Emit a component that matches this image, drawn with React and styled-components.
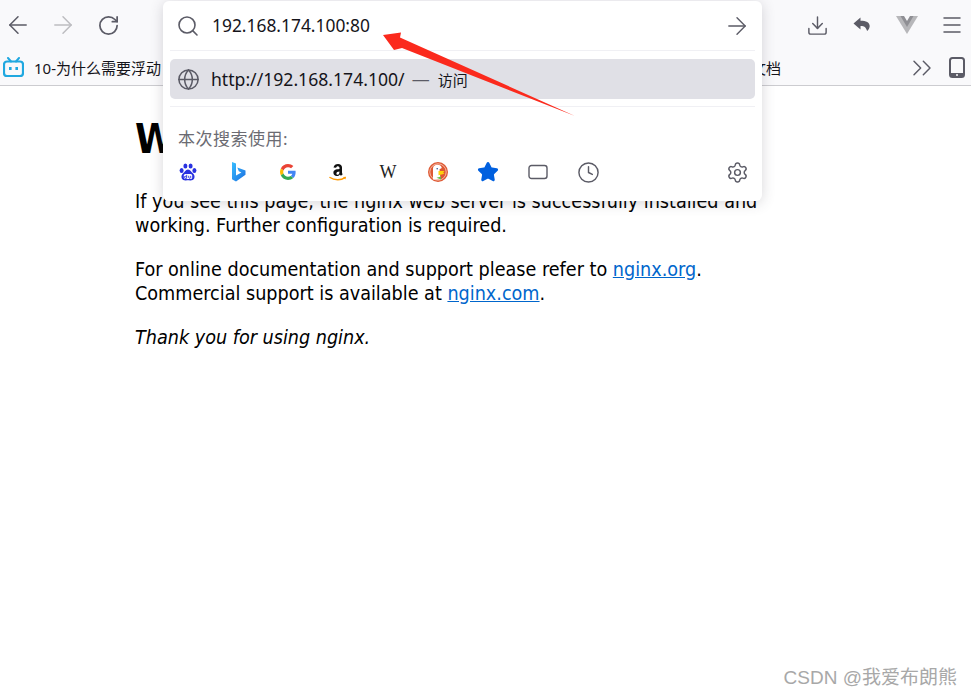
import styled, { createGlobalStyle } from 'styled-components';
import { ArrowLeft, ArrowRight, RotateCw, Search, Globe, Download, Menu, ChevronsRight, Clock, Settings, Star } from 'lucide-react';

const GlobalStyle = createGlobalStyle`
  html, body {
    margin: 0;
    padding: 0;
    background: #fff;
  }
  body {
    font-family: "DejaVu Sans Condensed", "DejaVu Sans", sans-serif;
    overflow: hidden;
  }
`;

const Screen = styled.div`
  position: relative;
  width: 971px;
  height: 698px;
  overflow: hidden;
  background: #fff;
`;

const Chrome = styled.header`
  background: #f9f9fb;
  border-bottom: 1px solid #ccccd0;
  height: 85px;
`;

const NavRow = styled.div`
  display: flex;
  align-items: center;
  height: 50px;
  padding-right: 1px;
`;

const ToolGroup = styled.div`
  display: flex;
  gap: 9px;
  margin-left: ${(p) => (p.$right ? 'auto' : '0')};
`;

const ToolButton = styled.div`
  width: 36px;
  height: 36px;
  display: flex;
  align-items: center;
  justify-content: center;
  color: ${(p) => (p.$disabled ? '#bdbdc1' : '#5b5b66')};
`;

const BookmarkRow = styled.div`
  display: flex;
  align-items: center;
  height: 35px;
  padding: 0 6px 0 3px;
  font-family: "Noto Sans", "Noto Sans CJK SC", sans-serif;
  font-size: 15px;
  color: #15141a;
`;

const Bookmark = styled.span`
  margin-left: ${(p) => p.$gap || 0}px;
  white-space: nowrap;
`;

const BarEnd = styled.div`
  display: flex;
  align-items: center;
  gap: 11px;
  margin-left: auto;
  color: #5b5b66;
`;

const UrlPopup = styled.div`
  position: absolute;
  left: 163px;
  top: 1px;
  width: 599px;
  height: 200px;
  box-sizing: border-box;
  padding: 0 7px;
  background: #fff;
  border-radius: 6px;
  box-shadow: 0 2px 14px rgba(58, 57, 68, 0.2);
  z-index: 2;
  font-family: "Noto Sans", "Noto Sans CJK SC", sans-serif;
  color: #15141a;
`;

const InputRow = styled.div`
  display: flex;
  align-items: center;
  height: 49px;
  padding: 0 4px 0 6px;
  gap: 12px;
  font-size: 17.4px;
  color: #5b5b66;
`;

const InputText = styled.span`
  color: #15141a;
  flex: 1;
  margin-bottom: 2px;
`;

const Divider = styled.div`
  height: 1px;
  background: #f0f0f4;
  margin-top: ${(p) => p.$top || 0}px;
`;

const Suggestion = styled.div`
  display: flex;
  align-items: center;
  height: 40px;
  margin-top: 8px;
  padding: 0 7px;
  gap: 11px;
  background: #e0e0e6;
  border-radius: 5px;
  color: #5b5b66;
`;

const SuggestionUrl = styled.span`
  font-size: 17.6px;
  color: #15141a;
`;

const SuggestionAction = styled.span`
  font-size: 15px;
  color: #15141a;
  margin-left: -3px;
`;

const Dash = styled.span`
  color: #5b5b66;
  font-size: 18px;
  margin-left: -4px;
`;

const EngineLabel = styled.div`
  height: 24px;
  line-height: 24px;
  margin-top: 20px;
  padding-left: 8px;
  font-size: 17px;
  letter-spacing: 0.5px;
  color: #6b6b72;
`;

const EngineRow = styled.div`
  display: flex;
  align-items: center;
  gap: 14px;
  height: 36px;
  margin-top: 3px;
`;

const Engine = styled.div`
  width: 36px;
  height: 36px;
  display: flex;
  align-items: center;
  justify-content: center;
  color: #5b5b66;
  margin-left: ${(p) => (p.$end ? 'auto' : '0')};
`;

const WikiGlyph = styled.span`
  font-family: "Liberation Serif", serif;
  font-size: 18px;
  color: #222;
`;

const Page = styled.main`
  width: 701px;
  margin: 0 auto;
  font-size: 19.6px;
  line-height: 24px;
  color: #000;
`;

const Heading = styled.h1`
  margin: 29px 0 27px;
  font-size: 40px;
  line-height: 48px;
  font-weight: 700;
  white-space: nowrap;
`;

const Para = styled.p`
  margin: 0 0 20px;
  font-style: ${(p) => (p.$italic ? 'italic' : 'normal')};
`;

const PageLink = styled.a`
  color: #0066cc;
  text-decoration: underline;
`;

const Annotation = styled.svg`
  position: absolute;
  left: 0;
  top: 0;
  z-index: 3;
  pointer-events: none;
`;

const Watermark = styled.div`
  position: absolute;
  right: 14px;
  bottom: 8px;
  font-family: "Liberation Sans", "Noto Sans CJK SC", sans-serif;
  font-size: 19px;
  line-height: 24px;
  color: #a8a8a8;
`;

const Bilibili = () => (
  <svg width="21" height="21" viewBox="0 0 21 21">
    <path d="M5 1l3 3.5M16 1l-3 3.5" stroke="#20a8e0" strokeWidth="2" strokeLinecap="round" />
    <rect x="1" y="4.5" width="19" height="14.5" rx="3" fill="none" stroke="#20a8e0" strokeWidth="2.2" />
    <rect x="6" y="10" width="2.6" height="3" fill="#20a8e0" />
    <rect x="12.4" y="10" width="2.6" height="3" fill="#20a8e0" />
  </svg>
);

const UndoIcon = () => (
  <svg width="20" height="20" viewBox="0 0 20 20">
    <path d="M8.5 2.500L1.500 8.500l7 6v-3.600c3.400-.1 5.500.9 6.600 5.200 1.600-1.400 2.600-3.200 2.600-5 0-3.600-3.500-5.400-9.200-5.400z" fill="#5b5b66" />
  </svg>
);

const VueMark = () => (
  <svg width="22" height="18" viewBox="0 0 22 18">
    <path d="M0 0h22L11 18z" fill="#b7b7ba" />
    <path d="M4.500 0h13L11 11z" fill="#8f8f94" />
    <path d="M8 0h6l-3 5z" fill="#f9f9fb" />
  </svg>
);

const PhoneIcon = () => (
  <svg width="16" height="21" viewBox="0 0 16 21">
    <rect x="1" y="1" width="14" height="19" rx="2.500" fill="none" stroke="#5b5b66" strokeWidth="2" />
    <rect x="1" y="16" width="14" height="4" fill="#5b5b66" />
    <circle cx="8" cy="18" r="1" fill="#f9f9fb" />
  </svg>
);

const BaiduIcon = () => (
  <svg width="18" height="18" viewBox="0 0 18 18" fill="#2932e1">
    <ellipse cx="2.600" cy="7.500" rx="2" ry="2.500" />
    <ellipse cx="6.400" cy="3" rx="2" ry="2.600" />
    <ellipse cx="11.600" cy="3" rx="2" ry="2.600" />
    <ellipse cx="15.400" cy="7.500" rx="2" ry="2.500" />
    <path d="M9 6.500c-2.500 0-3.300 2.500-4.800 3.800C2.700 11.500 2 13.500 2.700 15.200c.7 1.800 2.800 2.400 4.300 2.200 1.300-.2 2.700-.2 4 0 1.500.2 3.600-.4 4.300-2.200.7-1.700 0-3.700-1.500-4.900C12.300 9 11.500 6.500 9 6.500z" />
    <rect x="4.800" y="11" width="8.400" height="5" rx="1.500" fill="#fff" />
    <path d="M7.700 11.800v3.500H6c-1 0-1-2 0-2h1.700M9.700 12.800v1.700c0 1 2 1 2 0v-1.700" stroke="#2932e1" strokeWidth=".9" fill="none" />
  </svg>
);

const BingIcon = () => (
  <svg width="18" height="20" viewBox="0 0 18 20">
    <defs>
      <linearGradient id="bingGrad" x1="0" y1="0" x2="1" y2="1">
        <stop offset="0" stopColor="#37bdff" />
        <stop offset="1" stopColor="#1b6fe0" />
      </linearGradient>
    </defs>
    <path d="M3 0l4 1.400v12.200l5.400-3L9.800 9.300 8.300 5.600l8.200 2.900v4.200L7 19.500 3 17.200z" fill="url(#bingGrad)" />
  </svg>
);

const GoogleIcon = () => (
  <svg width="16" height="16" viewBox="0 0 48 48">
    <path fill="#EA4335" d="M24 9.500c3.500 0 6.700 1.200 9.200 3.600l6.900-6.900C35.900 2.400 30.500 0 24 0 14.600 0 6.500 5.400 2.600 13.200l8 6.200C12.400 13.700 17.700 9.500 24 9.500z" />
    <path fill="#4285F4" d="M46.900 24.500c0-1.600-.1-3.100-.4-4.500H24v9h12.900c-.6 3-2.200 5.500-4.700 7.200l7.700 6c4.500-4.200 7-10.300 7-17.700z" />
    <path fill="#FBBC05" d="M10.500 28.600c-.5-1.500-.8-3-.8-4.600s.3-3.200.8-4.600l-8-6.200C.9 16.500 0 20.100 0 24s.9 7.500 2.600 10.800l7.900-6.200z" />
    <path fill="#34A853" d="M24 48c6.500 0 11.900-2.100 15.900-5.800l-7.700-6c-2.100 1.400-4.900 2.300-8.200 2.300-6.300 0-11.600-4.200-13.500-9.900l-8 6.200C6.500 42.600 14.600 48 24 48z" />
  </svg>
);

const AmazonIcon = () => (
  <svg width="18" height="20" viewBox="0 0 18 20">
    <path d="M4.500 5.500C5 3 6.800 2 9 2c2.500 0 4 1.200 4 3.500v5c0 .8.300 1.300.7 1.800L12 13.800c-.5-.4-.9-.9-1.100-1.300-.8 1-1.800 1.500-3.100 1.500-2 0-3.400-1.200-3.400-3.200 0-2.700 2.300-3.500 6.100-3.800V6c0-1-.5-1.800-1.600-1.800-1 0-1.600.6-1.800 1.500zm6 3.900c-2.100.1-3.100.7-3.100 2 0 .8.500 1.300 1.200 1.300 1.300 0 1.900-1.300 1.900-3.300z" fill="#111" />
    <path d="M1 15.500c4.500 3 11 3 15 .2" stroke="#f90" strokeWidth="1.500" fill="none" strokeLinecap="round" />
    <path d="M14 15l3-.2-.7 2.600z" fill="#f90" />
  </svg>
);

const DuckIcon = () => (
  <svg width="20" height="20" viewBox="0 0 20 20">
    <circle cx="10" cy="10" r="10" fill="#de5833" />
    <circle cx="10" cy="10" r="8.200" fill="none" stroke="#f6c4b2" strokeWidth=".9" />
    <path d="M5 17.500V6.500C5 4 7 2.800 9.500 2.800c2.300 0 3.800 1.100 4.300 3.200l-2.300 1.200 1 10.300z" fill="#fff" />
    <circle cx="9.200" cy="6.800" r=".8" fill="#2d4f8e" />
    <path d="M10.500 9h6l-1.300 1.800 1.300 1-6 1.400z" fill="#fdd20a" />
    <path d="M8.500 15.800l4.500-1.300v3z" fill="#65bc46" />
  </svg>
);

const TabIcon = () => (
  <svg width="20" height="16" viewBox="0 0 20 16">
    <rect x="1" y="1.500" width="18" height="13" rx="2.500" fill="none" stroke="#5b5b66" strokeWidth="1.400" />
  </svg>
);

export default function App() {
  return (
    <Screen>
      <GlobalStyle />
      <Chrome>
        <NavRow>
          <ToolGroup>
            <ToolButton><ArrowLeft size={28} strokeWidth={1.3} /></ToolButton>
            <ToolButton $disabled><ArrowRight size={28} strokeWidth={1.3} /></ToolButton>
            <ToolButton><RotateCw size={23} strokeWidth={1.8} /></ToolButton>
          </ToolGroup>
          <ToolGroup $right>
            <ToolButton><Download size={23} strokeWidth={1.5} /></ToolButton>
            <ToolButton><UndoIcon /></ToolButton>
            <ToolButton><VueMark /></ToolButton>
            <ToolButton><Menu size={24} strokeWidth={1.5} /></ToolButton>
          </ToolGroup>
        </NavRow>
        <BookmarkRow>
          <Bilibili />
          <Bookmark $gap={10}>10-为什么需要浮动</Bookmark>
          <Bookmark $gap={590}>文档</Bookmark>
          <BarEnd>
            <ChevronsRight size={32} strokeWidth={1.1} />
            <PhoneIcon />
          </BarEnd>
        </BookmarkRow>
      </Chrome>

      <UrlPopup>
        <InputRow>
          <Search size={24} strokeWidth={1.6} />
          <InputText>192.168.174.100:80</InputText>
          <ArrowRight size={28} strokeWidth={1.2} />
        </InputRow>
        <Divider />
        <Suggestion>
          <Globe size={23} strokeWidth={1.6} />
          <SuggestionUrl>http://192.168.174.100/</SuggestionUrl>
          <Dash>—</Dash>
          <SuggestionAction>访问</SuggestionAction>
        </Suggestion>
        <Divider $top={7} />
        <EngineLabel>本次搜索使用:</EngineLabel>
        <EngineRow>
          <Engine><BaiduIcon /></Engine>
          <Engine><BingIcon /></Engine>
          <Engine><GoogleIcon /></Engine>
          <Engine><AmazonIcon /></Engine>
          <Engine><WikiGlyph>W</WikiGlyph></Engine>
          <Engine><DuckIcon /></Engine>
          <Engine><Star size={22} fill="#0060df" color="#0060df" /></Engine>
          <Engine><TabIcon /></Engine>
          <Engine><Clock size={23} strokeWidth={1.5} /></Engine>
          <Engine $end><Settings size={23} strokeWidth={1.5} /></Engine>
        </EngineRow>
      </UrlPopup>

      <Page>
        <Heading>Welcome to nginx!</Heading>
        <Para>
          If you see this page, the nginx web server is successfully installed and working. Further configuration is required.
        </Para>
        <Para>
          For online documentation and support please refer to <PageLink href="#">nginx.org</PageLink>.<br />
          Commercial support is available at <PageLink href="#">nginx.com</PageLink>.
        </Para>
        <Para $italic>Thank you for using nginx.</Para>
      </Page>

      <Annotation width="971" height="698" viewBox="0 0 971 698">
        <polygon points="383,35 401,32.500 400,37.500 575,116 402,48 394,50" fill="#fb2a1d" />
      </Annotation>
      <Watermark>CSDN @我爱布朗熊</Watermark>
    </Screen>
  );
}
